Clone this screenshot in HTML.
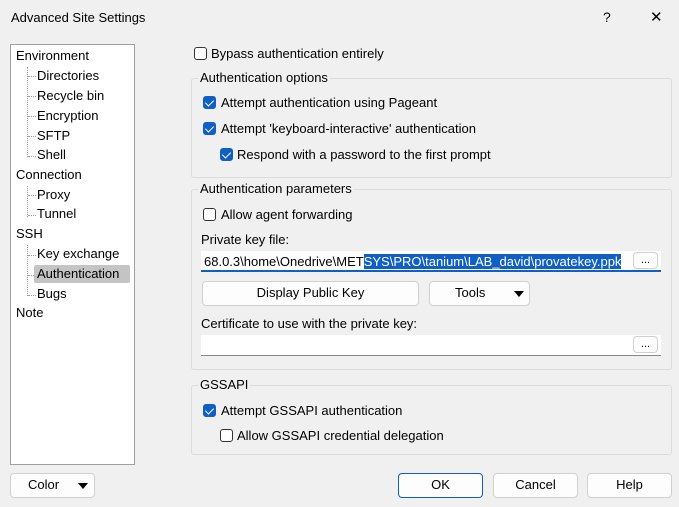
<!DOCTYPE html>
<html><head><style>
*{box-sizing:border-box}
body{margin:0;width:679px;height:507px;background:#f0f0f0;font-family:"Liberation Sans",sans-serif;font-size:13px;color:#000;position:relative;overflow:hidden}
.a{position:absolute;white-space:nowrap}
.tree{position:absolute;left:10px;top:44px;width:125px;height:421px;background:#fff;border:1px solid #a0a0a0}
.ti{position:absolute;line-height:18px}
.vl{position:absolute;border-left:1px dotted #999;width:0}
.hl{position:absolute;border-top:1px dotted #999;height:0;width:8px}
.grp{position:absolute;border:1px solid #dcdcdc;border-radius:3px}
.cb{position:absolute;width:13px;height:13px;border:1px solid #333;border-radius:3px;background:#fff}
.cb.on{background:#0f5fc4;border-color:#0f5fc4}
.cb.on:after{content:"";position:absolute;left:3px;top:1px;width:4px;height:7px;border:solid #fff;border-width:0 1.5px 1.5px 0;transform:rotate(45deg)}
.btn{position:absolute;background:#fdfdfd;border:1px solid #d0d0d0;border-radius:4px;text-align:center;line-height:22px}
.tri{position:absolute;width:0;height:0;border-left:5px solid transparent;border-right:5px solid transparent;border-top:6px solid #000}
.edit{position:absolute;background:#fff;border-bottom:1px solid #888}
</style></head><body>
<div class="a" style="left:11px;top:10px;font-size:13px">Advanced Site Settings</div>
<div class="a" style="left:603px;top:9px;font-size:14px">?</div>
<div class="a" style="left:650px;top:8px;font-size:15px">✕</div>

<div class="tree">
<div class="vl" style="left:16px;top:22px;height:90px"></div>
<div class="vl" style="left:16px;top:141px;height:31px"></div>
<div class="vl" style="left:16px;top:200px;height:51px"></div>
<div class="hl" style="left:17px;top:31px"></div><div class="hl" style="left:17px;top:51px"></div><div class="hl" style="left:17px;top:71px"></div><div class="hl" style="left:17px;top:91px"></div><div class="hl" style="left:17px;top:111px"></div>
<div class="hl" style="left:17px;top:150px"></div><div class="hl" style="left:17px;top:170px"></div>
<div class="hl" style="left:17px;top:210px"></div><div class="hl" style="left:17px;top:230px"></div><div class="hl" style="left:17px;top:250px"></div>
<div class="ti" style="left:5px;top:2px">Environment</div>
<div class="ti" style="left:26px;top:22px">Directories</div>
<div class="ti" style="left:26px;top:42px">Recycle bin</div>
<div class="ti" style="left:26px;top:62px">Encryption</div>
<div class="ti" style="left:26px;top:82px">SFTP</div>
<div class="ti" style="left:26px;top:101px">Shell</div>
<div class="ti" style="left:5px;top:121px">Connection</div>
<div class="ti" style="left:26px;top:141px">Proxy</div>
<div class="ti" style="left:26px;top:160px">Tunnel</div>
<div class="ti" style="left:5px;top:180px">SSH</div>
<div class="ti" style="left:26px;top:200px">Key exchange</div>
<div class="ti" style="left:23px;top:220px;background:#c4c4c4;padding:0 3px;border-radius:2px;width:96px">Authentication</div>
<div class="ti" style="left:26px;top:240px">Bugs</div>
<div class="ti" style="left:5px;top:259px">Note</div>
</div>

<div class="cb" style="left:194px;top:47px"></div>
<div class="a" style="left:211px;top:46px">Bypass authentication entirely</div>

<div class="grp" style="left:191px;top:78px;width:481px;height:100px"></div>
<div class="a" style="left:198px;top:70px;background:#f0f0f0;padding:0 2px">Authentication options</div>
<div class="cb on" style="left:203px;top:96px"></div><div class="a" style="left:221px;top:95px">Attempt authentication using Pageant</div>
<div class="cb on" style="left:203px;top:122px"></div><div class="a" style="left:221px;top:121px">Attempt 'keyboard-interactive' authentication</div>
<div class="cb on" style="left:220px;top:148px"></div><div class="a" style="left:237px;top:147px">Respond with a password to the first prompt</div>

<div class="grp" style="left:191px;top:189px;width:481px;height:181px"></div>
<div class="a" style="left:198px;top:181px;background:#f0f0f0;padding:0 2px">Authentication parameters</div>
<div class="cb" style="left:203px;top:208px"></div><div class="a" style="left:221px;top:207px">Allow agent forwarding</div>
<div class="a" style="left:201px;top:232px">Private key file:</div>
<div class="edit" style="left:201px;top:251px;width:460px;height:21px;border-bottom:2px solid #0f5fc4;overflow:hidden">
<div class="a" style="left:3px;top:3px">68.0.3\home\Onedrive\MET<span style="background:#0f5fc4;color:#fff">SYS\PRO\tanium\LAB_david\provatekey.ppk</span></div>
</div>
<div class="btn" style="left:633px;top:252px;width:25px;height:17px;line-height:14px;font-size:11px;z-index:2">...</div>
<div class="btn" style="left:202px;top:281px;width:217px;height:25px">Display Public Key</div>
<div class="btn" style="left:429px;top:281px;width:101px;height:25px;text-align:left;padding-left:25px">Tools</div>
<div class="tri" style="left:514px;top:291px"></div>
<div class="a" style="left:201px;top:316px">Certificate to use with the private key:</div>
<div class="edit" style="left:201px;top:335px;width:460px;height:21px"></div>
<div class="btn" style="left:633px;top:336px;width:25px;height:17px;line-height:14px;font-size:11px">...</div>

<div class="grp" style="left:191px;top:385px;width:481px;height:70px"></div>
<div class="a" style="left:198px;top:377px;background:#f0f0f0;padding:0 2px">GSSAPI</div>
<div class="cb on" style="left:203px;top:404px"></div><div class="a" style="left:221px;top:403px">Attempt GSSAPI authentication</div>
<div class="cb" style="left:220px;top:429px"></div><div class="a" style="left:237px;top:428px">Allow GSSAPI credential delegation</div>

<div class="btn" style="left:10px;top:473px;width:85px;height:25px;text-align:left;padding-left:17px">Color</div>
<div class="tri" style="left:78px;top:483px"></div>
<div class="btn" style="left:398px;top:473px;width:85px;height:25px;border-color:#0f5fc4">OK</div>
<div class="btn" style="left:493px;top:473px;width:85px;height:25px">Cancel</div>
<div class="btn" style="left:587px;top:473px;width:85px;height:25px">Help</div>
</body></html>
